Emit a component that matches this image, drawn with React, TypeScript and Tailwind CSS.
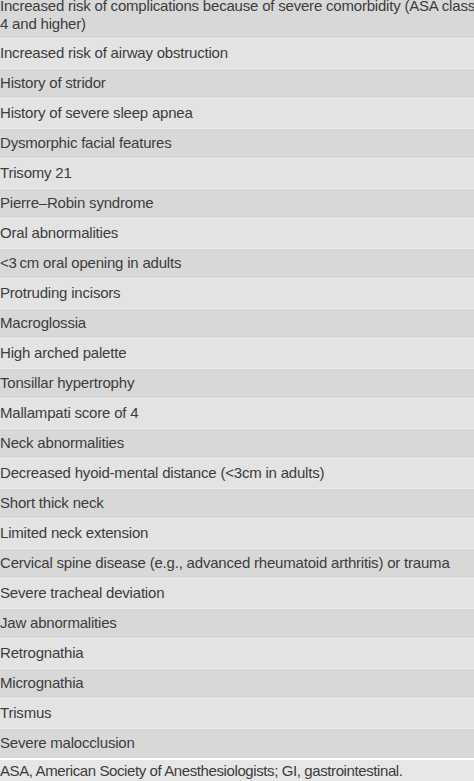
const rows = [
  "Increased risk of airway obstruction",
  "History of stridor",
  "History of severe sleep apnea",
  "Dysmorphic facial features",
  "Trisomy 21",
  "Pierre–Robin syndrome",
  "Oral abnormalities",
  "<3\u2009cm oral opening in adults",
  "Protruding incisors",
  "Macroglossia",
  "High arched palette",
  "Tonsillar hypertrophy",
  "Mallampati score of 4",
  "Neck abnormalities",
  "Decreased hyoid-mental distance (<3cm in adults)",
  "Short thick neck",
  "Limited neck extension",
  "Cervical spine disease (e.g., advanced rheumatoid arthritis) or trauma",
  "Severe tracheal deviation",
  "Jaw abnormalities",
  "Retrognathia",
  "Micrognathia",
  "Trismus",
  "Severe malocclusion",
]

export default function App() {
  return (
    <div
      className="w-[474px] h-[781px] overflow-hidden bg-white text-[15px] tracking-[-0.2px] text-[#3c3c3c]"
      style={{ fontFamily: '"Liberation Sans", Arial, sans-serif' }}
    >
      {/* first row is cut off at the top of the crop */}
      <div className="h-[38px] bg-[#d8d8d8] flex flex-col justify-end pb-[5px] leading-[18px] whitespace-nowrap">
        <div>Increased risk of complications because of severe comorbidity (ASA class</div>
        <div>4 and higher)</div>
      </div>

      {rows.map((r, i) => (
        <div
          key={r}
          className={
            i % 2 === 0
              ? "h-[30px] flex items-center border-t border-[#ececec] bg-[#e3e3e3] whitespace-nowrap"
              : "h-[30px] flex items-center border-t border-[#ececec] bg-[#d8d8d8] whitespace-nowrap"
          }
        >
          {r}
        </div>
      ))}

      <div className="mt-[2px] h-[21px] pt-[2px] bg-[#e6e6e6] flex items-center whitespace-nowrap tracking-[-0.4px]">
        ASA, American Society of Anesthesiologists; GI, gastrointestinal.
      </div>
    </div>
  )
}
